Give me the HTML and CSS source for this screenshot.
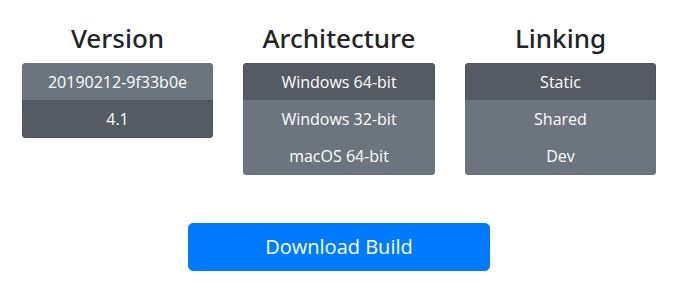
FILE: index.html
```html
<!DOCTYPE html>
<html>
<head>
<meta charset="utf-8">
<link rel="stylesheet" href="styles.css">
</head>
<body>
<div class="page">
  <div class="options">
    <div class="option">
      <h3 class="title">Version</h3>
      <div class="group">
        <div class="btn">20190212-9f33b0e</div>
        <div class="btn active">4.1</div>
      </div>
    </div>
    <div class="option">
      <h3 class="title">Architecture</h3>
      <div class="group">
        <div class="btn active">Windows 64-bit</div>
        <div class="btn">Windows 32-bit</div>
        <div class="btn">macOS 64-bit</div>
      </div>
    </div>
    <div class="option">
      <h3 class="title">Linking</h3>
      <div class="group">
        <div class="btn active">Static</div>
        <div class="btn">Shared</div>
        <div class="btn">Dev</div>
      </div>
    </div>
  </div>
  <div class="actions">
    <div class="download">Download Build</div>
  </div>
</div>
</body>
</html>
```
FILE: styles.css
```css
html, body {
  margin: 0;
  padding: 0;
  background: #fff;
}
body {
  font-family: "Open Sans", "Noto Sans", sans-serif;
  color: #212529;
}
.page {
  width: 634px;
  margin-left: 22px;
}
.options {
  display: grid;
  grid-template-columns: 191px 192px 191px;
  column-gap: 30px;
}
.title {
  margin: 22px 0 8px;
  font-family: "Noto Sans", "Open Sans", sans-serif;
  font-size: 26px;
  font-weight: 500;
  line-height: 33px;
  text-align: center;
  color: #212529;
}
.group {
  display: flex;
  flex-direction: column;
  border-radius: 4px;
  overflow: hidden;
}
.btn {
  height: 36px;
  line-height: 36px;
  border: 1px solid #6c757d;
  background: #6c757d;
  color: #fff;
  font-size: 16px;
  text-align: center;
}
.btn + .btn {
  margin-top: -1px;
}
.btn.active {
  background: #545b62;
  border-color: #4e555b;
}
.actions {
  display: flex;
  justify-content: center;
  margin-top: 48px;
}
.download {
  width: 300px;
  height: 46px;
  line-height: 46px;
  border: 1px solid #007bff;
  background: #007bff;
  color: #fff;
  font-size: 20px;
  text-align: center;
  border-radius: 5px;
}
```
